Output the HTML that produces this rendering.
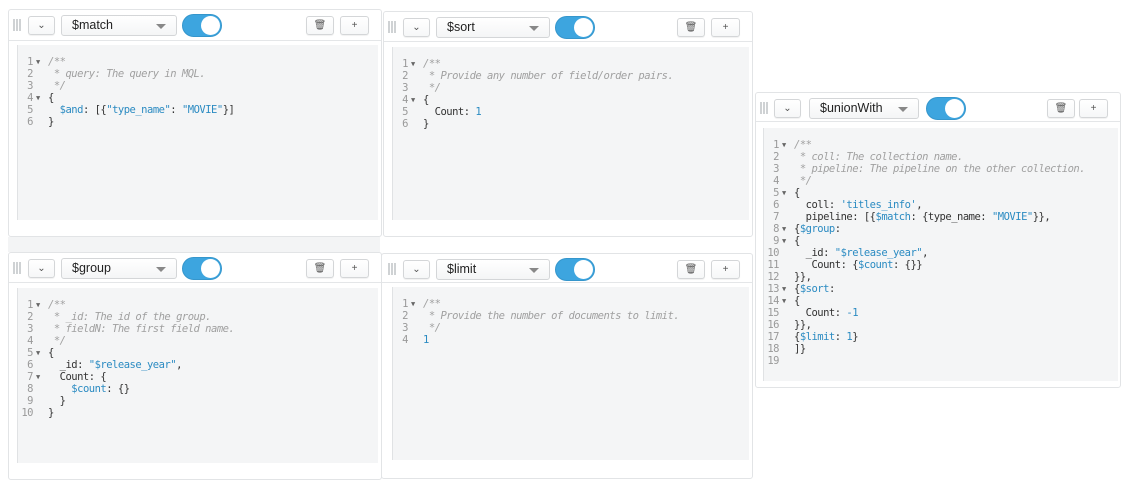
<!DOCTYPE html>
<html><head><meta charset="utf-8"><style>
*{box-sizing:border-box;margin:0;padding:0}
body{width:1131px;height:478px;background:#fff;position:relative;overflow:hidden;font-family:"Liberation Sans",sans-serif}
.card{position:absolute;background:#fff;border:1px solid #e2e4e6;border-radius:3px}
.hdr{position:absolute;left:0;right:0;top:0;height:31px;border-bottom:1px solid #e4e6e8}
.handle{position:absolute;left:4px;top:9px;width:9px;height:12px;background:repeating-linear-gradient(90deg,#cfd2d4 0 2px,transparent 2px 3px)}
.btn{position:absolute;top:6px;height:19px;border:1px solid #d4d6d8;border-radius:3px;background:linear-gradient(#fff,#f6f7f8);box-shadow:0 1px 1px rgba(0,0,0,.06);color:#555;font-size:10px;text-align:center;line-height:17px}
.sel{position:absolute;top:5px;height:21px;border:1px solid #d4d6d8;border-radius:3px;background:linear-gradient(#fff,#f4f5f6);font-size:12.5px;color:#222;padding-left:10px;line-height:19px}
.sel:after{content:"";position:absolute;right:10px;top:8px;border-left:5px solid transparent;border-right:5px solid transparent;border-top:5px solid #888}
.tog{position:absolute;top:4px;width:40px;height:23px;border-radius:12px;background:#3da5df;border:1px solid #3596cc}
.tog:after{content:"";position:absolute;right:1px;top:1px;width:19px;height:19px;border-radius:50%;background:#fff}
.ed{position:absolute;top:35px;background:#f4f5f6;border-left:1px solid #e0e2e4;font-family:"DejaVu Sans Mono",monospace;font-size:10.5px;letter-spacing:-0.5px;line-height:12px;color:#333;padding-top:11px}
.l{position:relative;height:12px;white-space:pre;padding-left:30px}
.n{position:absolute;left:0;width:15px;text-align:right;color:#999}
.f{position:absolute;left:18px;top:0;color:#666;font-size:7px}
.c{color:#a0a0a0;font-style:italic}
.b{color:#2b8bc2}
.band{position:absolute;left:8px;top:237px;width:372px;height:15px;background:#f3f4f5}
</style></head><body>
<div class="band"></div>

<div class="card" style="left:8px;top:9px;width:374px;height:228px">
 <div class="hdr"><div class="handle"></div><div class="btn" style="left:19px;width:27px">&#8964;</div><div class="sel" style="left:52px;width:116px">$match</div><div class="tog" style="left:173px"></div><div class="btn" style="right:47px;width:28px">&#128465;</div><div class="btn" style="right:12px;width:29px">+</div></div>
 <div class="ed" style="left:8px;width:361px;height:175px">
  <div class="l"><span class="n">1</span><span class="f">▼</span><span class="c">/**</span></div>
  <div class="l"><span class="n">2</span><span class="c"> * query: The query in MQL.</span></div>
  <div class="l"><span class="n">3</span><span class="c"> */</span></div>
  <div class="l"><span class="n">4</span><span class="f">▼</span>{</div>
  <div class="l"><span class="n">5</span>  <span class="b">$and</span>: [{<span class="b">"type_name"</span>: <span class="b">"MOVIE"</span>}]</div>
  <div class="l"><span class="n">6</span>}</div>
 </div>
</div>

<div class="card" style="left:383px;top:11px;width:370px;height:226px">
 <div class="hdr" style="height:30px"><div class="handle"></div><div class="btn" style="left:19px;width:27px">&#8964;</div><div class="sel" style="left:52px;width:114px">$sort</div><div class="tog" style="left:171px"></div><div class="btn" style="right:47px;width:28px">&#128465;</div><div class="btn" style="right:12px;width:29px">+</div></div>
 <div class="ed" style="left:8px;width:357px;height:173px">
  <div class="l"><span class="n">1</span><span class="f">▼</span><span class="c">/**</span></div>
  <div class="l"><span class="n">2</span><span class="c"> * Provide any number of field/order pairs.</span></div>
  <div class="l"><span class="n">3</span><span class="c"> */</span></div>
  <div class="l"><span class="n">4</span><span class="f">▼</span>{</div>
  <div class="l"><span class="n">5</span>  Count: <span class="b">1</span></div>
  <div class="l"><span class="n">6</span>}</div>
 </div>
</div>

<div class="card" style="left:8px;top:252px;width:374px;height:228px">
 <div class="hdr" style="height:30px"><div class="handle"></div><div class="btn" style="left:19px;width:27px">&#8964;</div><div class="sel" style="left:52px;width:116px">$group</div><div class="tog" style="left:173px"></div><div class="btn" style="right:47px;width:28px">&#128465;</div><div class="btn" style="right:12px;width:29px">+</div></div>
 <div class="ed" style="left:8px;width:361px;height:175px">
  <div class="l"><span class="n">1</span><span class="f">▼</span><span class="c">/**</span></div>
  <div class="l"><span class="n">2</span><span class="c"> * _id: The id of the group.</span></div>
  <div class="l"><span class="n">3</span><span class="c"> * fieldN: The first field name.</span></div>
  <div class="l"><span class="n">4</span><span class="c"> */</span></div>
  <div class="l"><span class="n">5</span><span class="f">▼</span>{</div>
  <div class="l"><span class="n">6</span>  _id: <span class="b">"$release_year"</span>,</div>
  <div class="l"><span class="n">7</span><span class="f">▼</span>  Count: {</div>
  <div class="l"><span class="n">8</span>    <span class="b">$count</span>: {}</div>
  <div class="l"><span class="n">9</span>  }</div>
  <div class="l"><span class="n">10</span>}</div>
 </div>
</div>

<div class="card" style="left:381px;top:253px;width:372px;height:226px">
 <div class="hdr" style="height:29px"><div class="handle" style="left:6px"></div><div class="btn" style="left:21px;width:27px">&#8964;</div><div class="sel" style="left:54px;width:114px">$limit</div><div class="tog" style="left:173px"></div><div class="btn" style="right:47px;width:28px">&#128465;</div><div class="btn" style="right:12px;width:29px">+</div></div>
 <div class="ed" style="left:10px;width:357px;height:173px;top:33px">
  <div class="l"><span class="n">1</span><span class="f">▼</span><span class="c">/**</span></div>
  <div class="l"><span class="n">2</span><span class="c"> * Provide the number of documents to limit.</span></div>
  <div class="l"><span class="n">3</span><span class="c"> */</span></div>
  <div class="l"><span class="n">4</span><span class="b">1</span></div>
 </div>
</div>

<div class="card" style="left:755px;top:92px;width:366px;height:296px">
 <div class="hdr" style="height:29px"><div class="handle"></div><div class="btn" style="left:18px;width:27px">&#8964;</div><div class="sel" style="left:53px;width:110px">$unionWith</div><div class="tog" style="left:170px"></div><div class="btn" style="right:45px;width:28px">&#128465;</div><div class="btn" style="right:12px;width:29px">+</div></div>
 <div class="ed" style="left:7px;width:355px;height:253px">
  <div class="l"><span class="n">1</span><span class="f">▼</span><span class="c">/**</span></div>
  <div class="l"><span class="n">2</span><span class="c"> * coll: The collection name.</span></div>
  <div class="l"><span class="n">3</span><span class="c"> * pipeline: The pipeline on the other collection.</span></div>
  <div class="l"><span class="n">4</span><span class="c"> */</span></div>
  <div class="l"><span class="n">5</span><span class="f">▼</span>{</div>
  <div class="l"><span class="n">6</span>  coll: <span class="b">'titles_info'</span>,</div>
  <div class="l"><span class="n">7</span>  pipeline: [{<span class="b">$match</span>: {type_name: <span class="b">"MOVIE"</span>}},</div>
  <div class="l"><span class="n">8</span><span class="f">▼</span>{<span class="b">$group</span>:</div>
  <div class="l"><span class="n">9</span><span class="f">▼</span>{</div>
  <div class="l"><span class="n">10</span>  _id: <span class="b">"$release_year"</span>,</div>
  <div class="l"><span class="n">11</span>   Count: {<span class="b">$count</span>: {}}</div>
  <div class="l"><span class="n">12</span>}},</div>
  <div class="l"><span class="n">13</span><span class="f">▼</span>{<span class="b">$sort</span>:</div>
  <div class="l"><span class="n">14</span><span class="f">▼</span>{</div>
  <div class="l"><span class="n">15</span>  Count: <span class="b">-1</span></div>
  <div class="l"><span class="n">16</span>}},</div>
  <div class="l"><span class="n">17</span>{<span class="b">$limit</span>: <span class="b">1</span>}</div>
  <div class="l"><span class="n">18</span>]}</div>
  <div class="l"><span class="n">19</span></div>
 </div>
</div>
</body></html>
